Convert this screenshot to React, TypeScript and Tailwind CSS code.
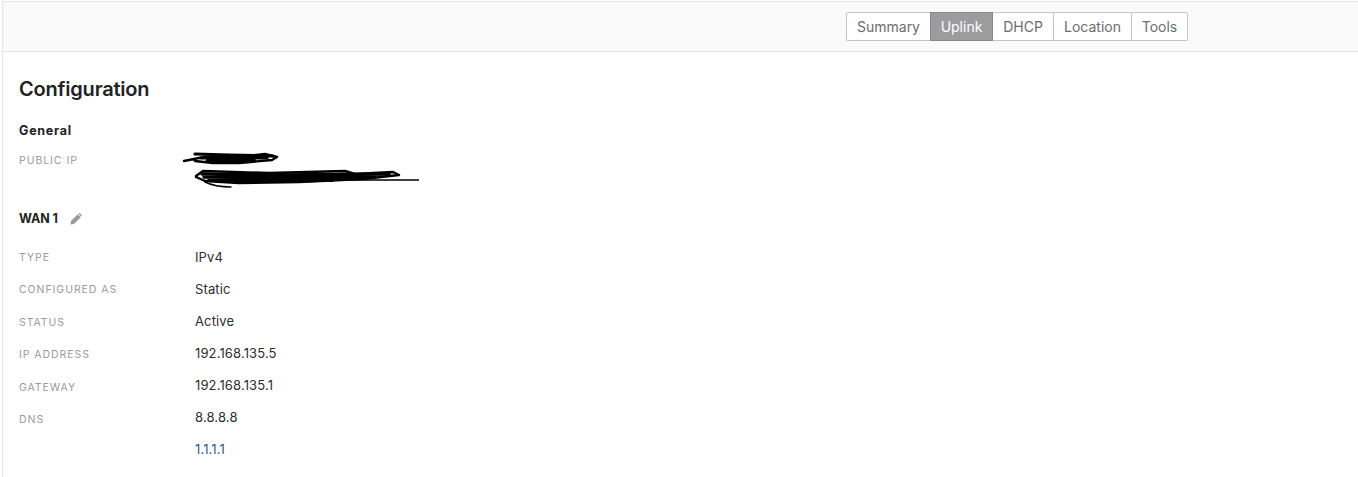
const tabs = [
  { name: "Summary", box: "w-[84px] rounded-l-[2px] border-y border-l border-[#c4c4c6] bg-white text-[#6c6c6e]" },
  { name: "Uplink", box: "w-[63px] border border-[#88888a] bg-[#9c9c9e] text-white" },
  { name: "DHCP", box: "w-[61px] border-y border-r border-[#c4c4c6] bg-white text-[#6c6c6e]" },
  { name: "Location", box: "w-[78px] border-y border-r border-[#c4c4c6] bg-white text-[#6c6c6e]" },
  { name: "Tools", box: "w-[56px] rounded-r-[2px] border-y border-r border-[#c4c4c6] bg-white text-[#6c6c6e]" },
];

const wanRows = [
  { label: "TYPE", value: "IPv4", labelClass: "" },
  { label: "CONFIGURED AS", value: "Static", labelClass: "" },
  { label: "STATUS", value: "Active", labelClass: "pt-[2px]" },
  { label: "IP ADDRESS", value: "192.168.135.5", labelClass: "pt-[2px]" },
  { label: "GATEWAY", value: "192.168.135.1", labelClass: "pt-[4px]" },
  { label: "DNS", value: "8.8.8.8", labelClass: "pt-[4px]" },
  { label: "", value: "1.1.1.1", labelClass: "" },
];

function Row({ label, value, labelClass }: { label: string; value: string; labelClass: string }) {
  return (
    <div className="mt-[12px] flex h-[20px] items-center">
      <div className={`w-[176px] text-[10.5px] tracking-[0.09em] text-[#9a9a9c] ${labelClass}`}>{label}</div>
      <div className={`text-[13px] tracking-[0.01em] ${value === "1.1.1.1" ? "text-[#1f5c96]" : "text-[#2e2e30]"}`}>{value}</div>
    </div>
  );
}

// scribbled-out public IP in the reference
function Scribble() {
  return (
    <svg width="240" height="40" viewBox="0 0 240 40" className="ml-[-4px] block" fill="none" stroke="#000" strokeLinecap="round" strokeLinejoin="round">
      <path d="M5 12 L25 8 L60 8 L86 5 L98 8 L93 11 L60 14 L34 14 L16 12" strokeWidth="2.4" />
      <path d="M16 5 L50 6 L94 7 M22 9 L88 9 M28 12 L76 12" strokeWidth="3.2" />
      <path d="M17 27 L24 22 L90 24 L166 22 L176 25 L214 23 L220 26 L184 30 L120 33 L60 34 L26 32 L17 28" strokeWidth="2.4" />
      <path d="M23 25 L100 26 L210 25 M25 28 L110 29 L196 28 M30 31 L100 32 L154 31" strokeWidth="3.4" />
      <path d="M154 31 L240 31" strokeWidth="1.4" />
      <path d="M26 33 Q36 38 52 38" strokeWidth="1.4" />
    </svg>
  );
}

function Pencil() {
  return (
    <svg width="12" height="12" viewBox="0 0 12 12" className="ml-[12px]" fill="#9a9a9c">
      <path d="M0.5 11.5 L1 8 L7.8 1.2 L10.8 4.2 L4 11 Z" />
      <path d="M8.7 0.6 Q9.6 0 10.4 0.6 L11.4 1.6 Q12 2.4 11.4 3.2 L11.2 3.4 L8.5 0.8 Z" />
    </svg>
  );
}

export default function App() {
  return (
    <div className="h-[477px] w-[1358px] overflow-hidden bg-white pt-px font-['Inter',sans-serif]">
      <div className="ml-[2px] h-[476px] border-t border-l border-[#e4e4e4]">
        {/* Tab bar */}
        <div className="flex h-[50px] items-start border-b border-[#e4e4e4] bg-[#fafafa] pt-[10px] pl-[843px]">
          <div className="flex h-[29px]">
            {tabs.map((tab) => (
              <div key={tab.name} className={`flex items-center justify-center text-[14px] ${tab.box}`}>
                {tab.name}
              </div>
            ))}
          </div>
        </div>

        <div className="pl-[16px]">
          <h1 className="mt-[22px] text-[20px] leading-[30px] font-semibold tracking-[-0.01em] text-[#222224]">Configuration</h1>

          <h2 className="mt-[17px] text-[12.5px] leading-[20px] font-bold tracking-[0.06em] text-[#222224]">General</h2>
          <div className="mt-[8px] flex h-[40px]">
            <div className="w-[164px] pt-[4px] text-[10.5px] tracking-[0.09em] text-[#9a9a9c]">PUBLIC IP</div>
            <Scribble />
          </div>

          <div className="mt-[20px] flex h-[20px] items-center">
            <h2 className="text-[12.5px] font-bold tracking-[-0.01em] text-[#222224]">WAN 1</h2>
            <Pencil />
          </div>

          <div className="mt-[19px]">
            {wanRows.map((row) => (
              <Row key={row.value} {...row} />
            ))}
          </div>
        </div>
      </div>
    </div>
  );
}
